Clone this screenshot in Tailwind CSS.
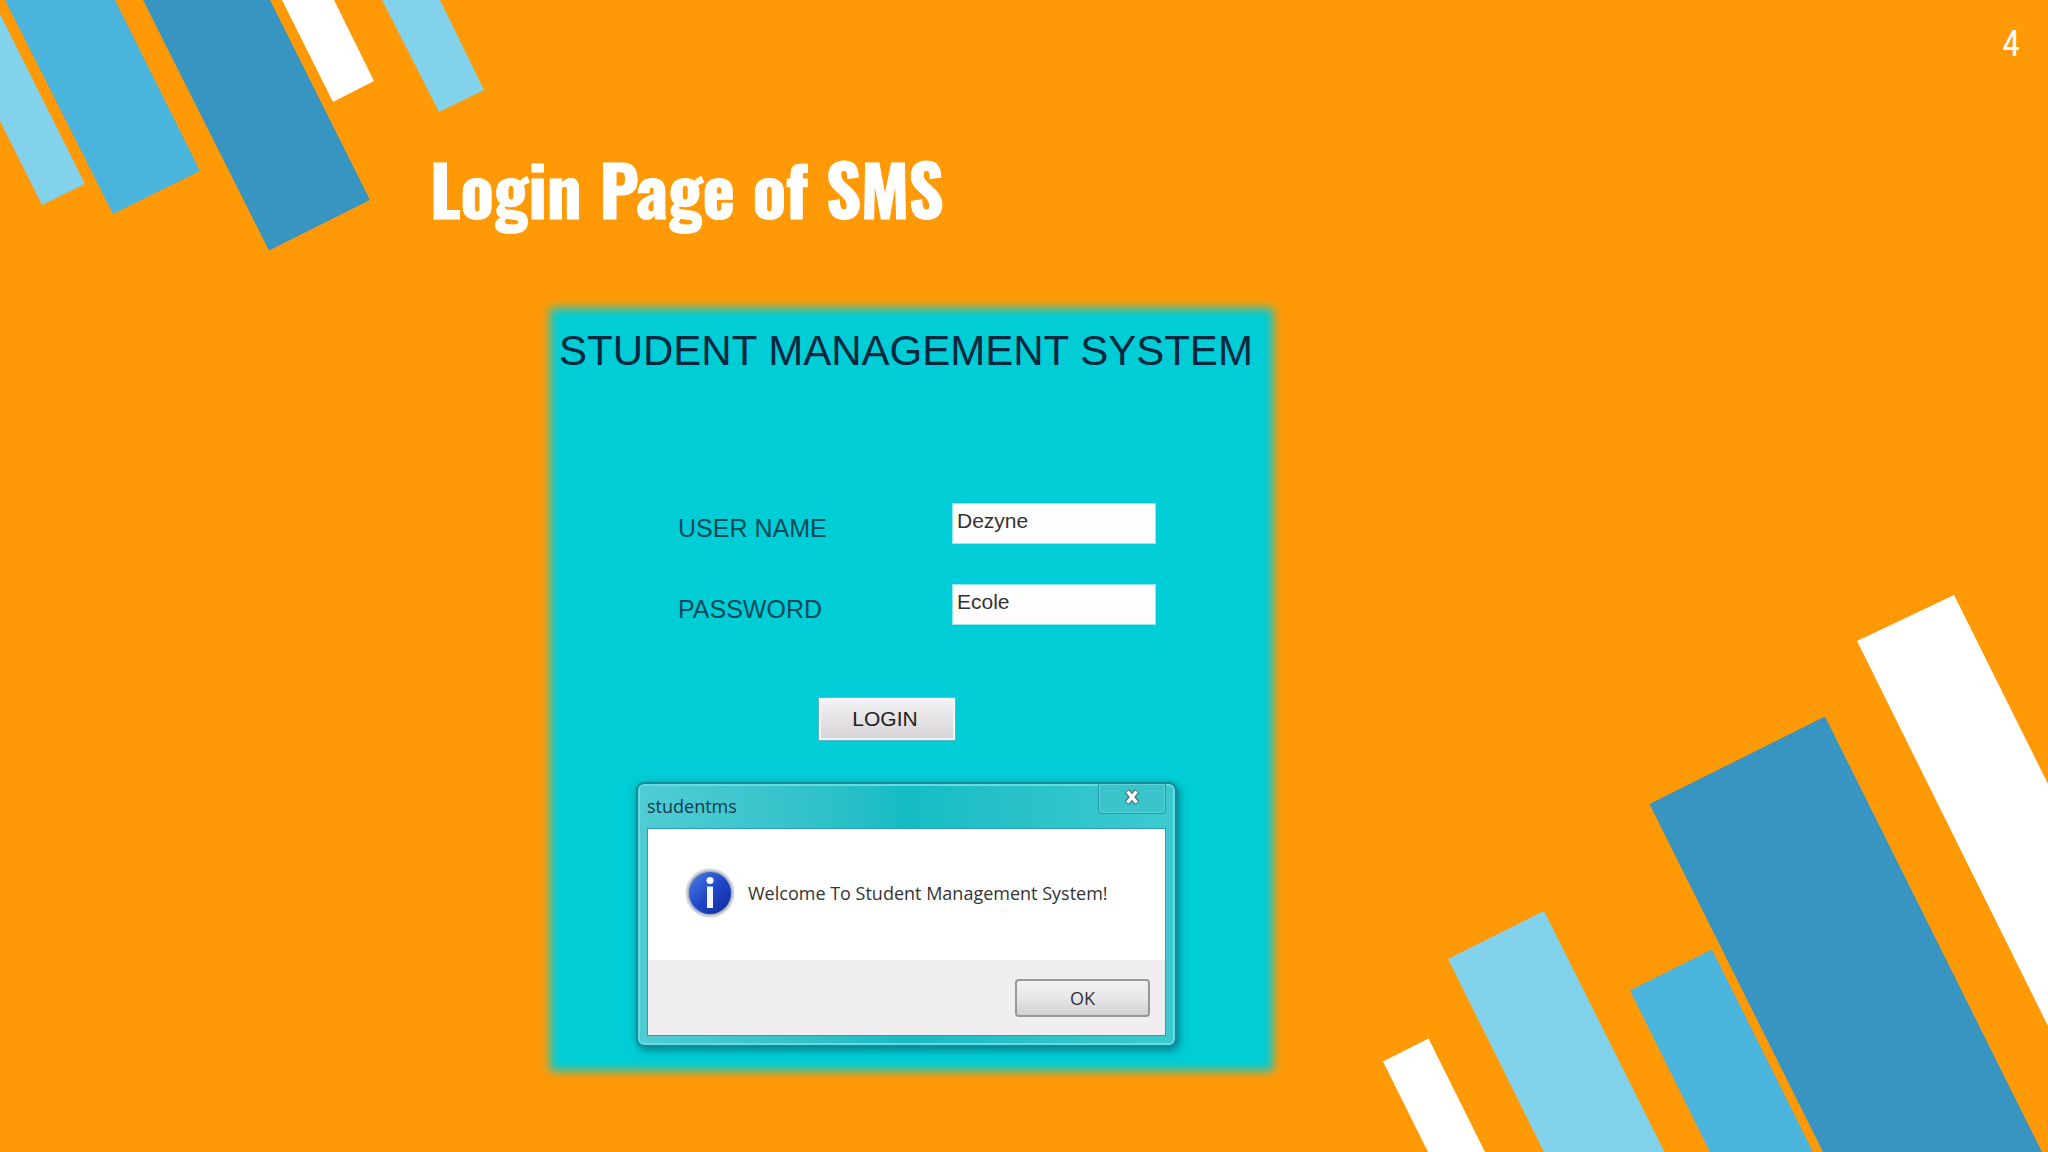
<!DOCTYPE html>
<html lang="en">
<head>
<meta charset="utf-8">
<meta name="viewport" content="width=device-width, initial-scale=1">
<title>Login Page of SMS</title>
<script src="https://cdn.jsdelivr.net/npm/@tailwindcss/browser@4"></script>
</head>
<body class="bg-[#ff9905]">
<main class="relative flex min-h-screen flex-col overflow-hidden bg-[#ff9905] font-['Liberation_Sans',Arial,sans-serif]">

  <!-- Corner stripes -->
  <svg class="absolute top-0 left-0" width="500" height="260" viewBox="0 0 500 260" aria-hidden="true">
    <path fill="#82d2ec" d="M0 14 85 184 42 205 0 121Z"/>
    <path fill="#4bb4dc" d="M5 0H115L200 171 113 214Z"/>
    <path fill="#3895c1" d="M143 0H270L370 200 269 250.500Z"/>
    <path fill="#fff" d="M282 0H334L374 81 333 102Z"/>
    <path fill="#82d2ec" d="M382 0H440L484 90 439 112Z"/>
  </svg>
  <svg class="absolute right-0 bottom-0" width="678" height="572" viewBox="1370 580 678 572" aria-hidden="true">
    <path fill="#fff" d="M1857 641 1954 595 2048 784V1026Z"/>
    <path fill="#3895c1" d="M1649.500 804 1825 716.500 2042 1152H1823Z"/>
    <path fill="#82d2ec" d="M1448 959 1544 911 1664.500 1152H1544Z"/>
    <path fill="#4bb4dc" d="M1630 990.500 1712 949.500 1813 1152H1710Z"/>
    <path fill="#fff" d="M1383 1061.500 1428.500 1038.500 1485 1152H1428Z"/>
  </svg>

  <header class="relative flex items-start justify-between pt-6 pr-7 pl-[430px]">
    <h1 class="pt-[126px] font-['Oswald','Liberation_Sans_Narrow',sans-serif] text-[69px] leading-[76px] font-bold whitespace-nowrap text-white [-webkit-text-stroke:1px_white]">Login Page of SMS</h1>
    <span class="font-['Roboto_Condensed','Roboto',sans-serif] text-4xl text-white">4</span>
  </header>

  <section class="relative mt-[82px] mb-16 ml-[548px] w-[727px] pb-6">
    <div class="absolute inset-x-0.5 inset-y-0 bg-[#00cdd6] blur-[5px]"></div>
    <div class="relative">
      <h2 class="pt-[19px] pl-[11px] text-[42px] leading-[48px] whitespace-nowrap text-[#06283f]">STUDENT MANAGEMENT SYSTEM</h2>

      <form class="pt-32" onsubmit="return false">
        <div class="flex flex-col gap-10 pr-[119px] pl-[130px]">
          <div class="flex items-center justify-between">
            <label for="user" class="pt-2 text-[25px] leading-8 text-[#064a58]">USER NAME</label>
            <input id="user" type="text" value="Dezyne" class="h-[41px] w-[204px] border border-[#8fe6ea] bg-[#fdfdfd] px-1 pb-1.5 text-[21px] text-[#333]">
          </div>
          <div class="flex items-center justify-between">
            <label for="pass" class="pt-2 text-[25px] leading-8 text-[#064a58]">PASSWORD</label>
            <input id="pass" type="text" value="Ecole" class="h-[41px] w-[204px] border border-[#8fe6ea] bg-[#fdfdfd] px-1 pb-1.5 text-[21px] text-[#333]">
          </div>
        </div>
        <button type="submit" class="mt-[72px] ml-[270px] block h-11 w-[138px] border border-[#5cb8c4] bg-linear-to-b from-[#f6f3f6] via-[#e6e3e6] to-[#d6d2d6] pr-1 text-[21px] text-[#222] shadow-[inset_0_0_0_2px_#f2f4fa]">LOGIN</button>
      </form>

      <div role="dialog" aria-labelledby="dlg" class="mt-[41px] ml-[88px] w-[541px] rounded-lg border-2 border-[#128c98] bg-[#38c8d0] bg-linear-to-r from-[#50ccd4] via-[#14bcc4] to-[#3ccad0] px-[9px] pb-[9px] font-['Open_Sans','Noto_Sans',sans-serif] shadow-[inset_0_0_0_2px_#64dce2,2px_3px_8px_#067c84]">
        <div class="flex h-11 items-start justify-between">
          <h3 id="dlg" class="pt-2 text-lg leading-7 text-[#123c48]">studentms</h3>
          <button type="button" aria-label="Close" class="flex h-[30px] w-[68px] items-center justify-center rounded-b border border-t-0 border-[#209ca8] bg-[#3cc4cc] pb-1 shadow-[inset_0_0_0_1px_#5cd4da]">
            <svg width="18" height="18" viewBox="0 0 18 18" aria-hidden="true"><path d="M4 3 14 15M14 3 4 15" stroke="#4c7888" stroke-width="6"/><path d="M4.500 3.500 13.500 14.500M13.500 3.500 4.500 14.500" stroke="#fff" stroke-width="3.500"/></svg>
          </button>
        </div>
        <div class="border border-[#2ba0a8] bg-white">
          <div class="flex h-[131px] items-center gap-[13px] pb-1 pl-[37px]">
            <svg width="50" height="50" viewBox="0 0 50 50" aria-hidden="true">
              <defs><linearGradient id="info" x1="0" y1="0" x2="1" y2="1"><stop offset="0" stop-color="#4f7fe0"/><stop offset=".5" stop-color="#1f48c8"/><stop offset="1" stop-color="#102a9c"/></linearGradient></defs>
              <circle cx="25" cy="25" r="24.500" fill="#d4d8dc"/>
              <circle cx="25" cy="25" r="22.500" fill="#a4acc0"/>
              <circle cx="25" cy="25" r="21" fill="url(#info)"/>
              <circle cx="25" cy="12.500" r="3.500" fill="#fff"/>
              <path d="M22 18.500H28V40H22Z" fill="#f2f6ff"/>
            </svg>
            <p class="text-lg leading-6 whitespace-nowrap text-[#333]">Welcome To Student Management System!</p>
          </div>
          <div class="flex h-[75px] items-center justify-end bg-[#f0eef0] pr-[15px]">
            <button type="button" class="h-[38px] w-[135px] rounded border-2 border-[#989898] bg-linear-to-b from-[#f4f3f4] via-[#e8e6e8] to-[#d2d0d2] text-lg leading-6 text-[#333]">OK</button>
          </div>
        </div>
      </div>
    </div>
  </section>
</main>
</body>
</html>
